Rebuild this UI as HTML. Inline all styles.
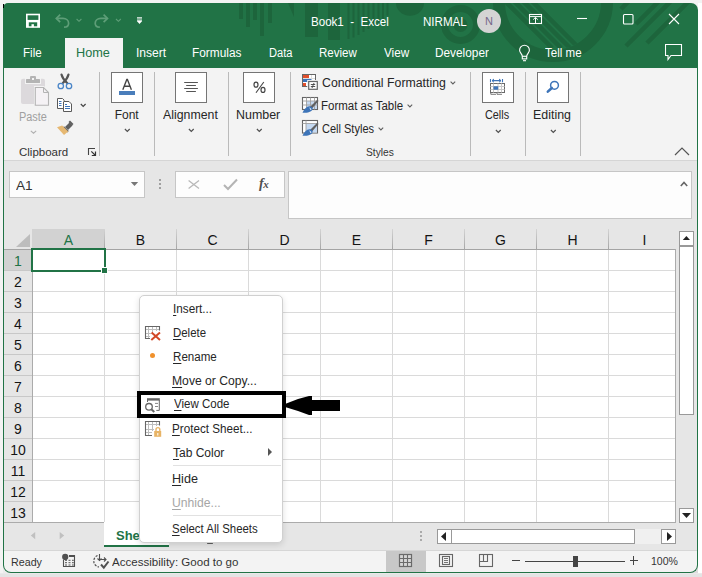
<!DOCTYPE html>
<html><head><meta charset="utf-8">
<style>
*{margin:0;padding:0;box-sizing:border-box}
html,body{width:702px;height:577px;overflow:hidden;background:#f3f3f3;font-family:"Liberation Sans",sans-serif}
.a{position:absolute}
.t{position:absolute;white-space:nowrap;line-height:1}
.w{color:#fff}
.hdr{font-size:14px;line-height:20px;text-align:center}
.sep{position:absolute;width:1px;background:#bababa}
.chev{position:absolute;width:5px;height:5px;border-right:1px solid #555;border-bottom:1px solid #555;transform:rotate(45deg)}
.mi{position:absolute;left:173px;font-size:12px;color:#262626;white-space:nowrap;line-height:1}
.mi u{text-decoration:underline;text-underline-offset:2px}
u{text-decoration:underline;text-underline-offset:1.5px;text-decoration-thickness:1px}
</style></head><body>
<!-- outer -->
<div class="a" style="left:698px;top:3px;width:4px;height:570px;background:#fff"></div>
<div class="a" style="left:0;top:573px;width:702px;height:4px;background:#e4e4e4;border-top:1px solid #eae9ea"></div>

<!-- window -->
<div class="a" style="left:3px;top:3px;width:695px;height:570px;border-radius:5px 7px 7px 7px;background:#217346;overflow:hidden">
  <!-- title pattern -->
  <svg class="a" style="left:0;top:0" width="695" height="64" viewBox="3 3 695 64">
    <g fill="#1d653c">
      <rect x="239" y="3" width="4" height="16"/>
      <rect x="246" y="3" width="4" height="24"/>
      <rect x="253" y="3" width="4" height="17"/>
      <rect x="260" y="3" width="4" height="33"/>
      <rect x="268" y="3" width="4" height="20"/>
      <polygon points="288,3 294,3 294,17"/>
      <rect x="305" y="3" width="13" height="34"/>
      <rect x="328" y="3" width="12" height="37"/>
      <rect x="347.5" y="3" width="2" height="36"/>
      <rect x="352.5" y="3" width="2" height="34.5"/>
      <rect x="357.5" y="3" width="2" height="32"/>
      <rect x="362.5" y="3" width="2" height="29"/>
      <rect x="367.5" y="3" width="2" height="26"/>
      <rect x="372.5" y="3" width="2" height="23"/>
      <rect x="377.5" y="3" width="2" height="19.5"/>
      <rect x="382" y="3" width="2" height="16"/>
      <rect x="386.5" y="3" width="2" height="12.5"/>
      <path d="M396,3 A14,12.7 0 0 0 424,3 Z"/>
    </g>
    <circle cx="460.5" cy="24.5" r="16" fill="none" stroke="#1d653c" stroke-width="7"/>
    <circle cx="460.5" cy="25" r="7" fill="#1d653c"/>
    <circle cx="553" cy="2" r="54" fill="none" stroke="#1d653c" stroke-width="12"/>
    <clipPath id="cin"><circle cx="553" cy="2" r="48"/></clipPath>
    <g clip-path="url(#cin)" stroke="#1d653c" stroke-width="4.5">
      <path d="M502,-2 L552,48 M511,-2 L561,48 M520,-2 L570,48 M529,-2 L579,48"/>
    </g>
    <g stroke="#1d653c" stroke-width="4.5">
      <path d="M621,9 L629,1 M636,24 L662,-2 M626,46 L676,-4 M647,43 L695,-5"/>
    </g>
  </svg>
</div>

<div class="a" style="left:3px;top:4px;width:1px;height:4px;background:#000"></div>
<!-- title bar content -->
<svg class="a" style="left:20px;top:8px" width="130" height="26" viewBox="20 8 130 26">
  <rect x="26" y="13.7" width="14" height="14.1" fill="#fff"/>
  <rect x="27.6" y="15.3" width="10.8" height="4.6" fill="#217346"/>
  <rect x="28.8" y="22.3" width="8.4" height="4" fill="#217346"/>
  <rect x="31.5" y="24.2" width="2.4" height="3" fill="#fff"/>
  <path d="M56.5,18.4 H63 C66.3,18.4 68.6,20.6 68.6,23.2 C68.6,25.6 66.6,27.2 64,27.2" fill="none" stroke="#5e9e78" stroke-width="1.7"/>
  <path d="M60.2,14.6 L56.3,18.4 L60.2,22.2" fill="none" stroke="#5e9e78" stroke-width="1.7"/>
  <path d="M76.6,19 L79,21.3 L81.4,19" fill="none" stroke="#5e9e78" stroke-width="1.1"/>
  <path d="M107.3,18.4 H100.8 C97.5,18.4 95.2,20.6 95.2,23.2 C95.2,25.6 97.2,27.2 99.8,27.2" fill="none" stroke="#5e9e78" stroke-width="1.7"/>
  <path d="M103.6,14.6 L107.5,18.4 L103.6,22.2" fill="none" stroke="#5e9e78" stroke-width="1.7"/>
  <path d="M116,19 L118.4,21.3 L120.8,19" fill="none" stroke="#5e9e78" stroke-width="1.1"/>
  <rect x="137" y="17.3" width="5" height="1.2" fill="#fff"/>
  <rect x="137" y="19.6" width="5" height="1.1" fill="#fff"/>
  <path d="M136.8,21 H142.2 L139.5,23.9 Z" fill="#fff"/>
</svg>
<div class="a" style="left:477px;top:9px;width:24px;height:24px;border-radius:50%;background:#d4d4d4;color:#74688a;font-size:11px;line-height:24px;text-align:center">N</div>
<svg class="a" style="left:520px;top:8px" width="170" height="22" viewBox="520 8 170 22">
  <rect x="529.5" y="14.5" width="12" height="9" fill="none" stroke="#fff" stroke-width="1.1"/>
  <path d="M529.5,16.6 H541.5" stroke="#fff" stroke-width="1"/>
  <path d="M535.5,23.5 V17.5 M533.2,19.6 L535.5,17.4 L537.8,19.6" fill="none" stroke="#fff" stroke-width="1"/>
  <path d="M577,18.5 H587" stroke="#fff" stroke-width="1.1"/>
  <rect x="623.5" y="14.5" width="9.5" height="9.5" rx="1" fill="none" stroke="#fff" stroke-width="1.1"/>
  <path d="M669,14 L679,24 M679,14 L669,24" stroke="#fff" stroke-width="1.1"/>
</svg>

<!-- tabs -->
<div class="a" style="left:65px;top:38px;width:58px;height:30px;background:#f3f3f3"></div>
<svg class="a" style="left:515px;top:42px" width="18" height="22" viewBox="515 42 18 22">
  <path d="M522.3,56.3 C522.3,54 519.6,52.6 519.6,50.2 A4.9,4.9 0 0 1 529.4,50.2 C529.4,52.6 526.7,54 526.7,56.3" fill="none" stroke="#fff" stroke-width="1.1"/>
  <rect x="522.3" y="56.3" width="4.4" height="2.6" fill="none" stroke="#fff" stroke-width="1.1"/>
  <path d="M523,60.7 H526" stroke="#fff" stroke-width="1.1"/>
</svg>
<svg class="a" style="left:665px;top:44px" width="18" height="17" viewBox="0 0 18 17">
  <path d="M0.5,0.5 H16.5 V11.5 H6 L3,15.5 V11.5 H0.5 Z" fill="none" stroke="#fff" stroke-width="1.1"/>
</svg>

<!-- ribbon body -->
<div class="a" style="left:4px;top:68px;width:693px;height:504px;background:#e6e6e6"></div>
<div class="a" style="left:4px;top:68px;width:693px;height:92px;background:#f3f3f3"></div>
<div class="a" style="left:4px;top:160px;width:693px;height:1px;background:#d5d5d5"></div>
<!-- green side borders -->
<div class="a" style="left:3px;top:68px;width:1px;height:500px;background:#217346"></div>
<div class="a" style="left:697px;top:68px;width:1px;height:500px;background:#217346"></div>

<!-- Clipboard group -->
<svg class="a" style="left:20px;top:75px" width="31" height="32" viewBox="20 75 31 32">
  <rect x="21" y="78.7" width="24" height="25.3" rx="2" fill="#dcd9dc"/>
  <rect x="25" y="78" width="16" height="6" fill="#f3f3f3"/>
  <rect x="26" y="79" width="14" height="4" rx="0.5" fill="#b4b4b4"/>
  <rect x="30" y="76" width="6" height="4" rx="1" fill="#b4b4b4"/>
  <rect x="32" y="78" width="2" height="2" fill="#f3f3f3"/>
  <path d="M34,86 H44 L50,92 V106.5 H34 Z" fill="#f3f3f3"/>
  <path d="M35.3,87.5 H43.5 L48.5,92.5 V105.2 H35.3 Z" fill="#f5f2f5" stroke="#b4b4b4" stroke-width="1.1"/>
  <path d="M43.5,87.5 V92.5 H48.5" fill="none" stroke="#b4b4b4" stroke-width="1"/>
</svg>
<svg class="a" style="left:30px;top:130px" width="7" height="4"><path d="M0.8,0.8 L3.5,3.2 L6.2,0.8" fill="none" stroke="#b0b0b0" stroke-width="1.1"/></svg>
<svg class="a" style="left:55px;top:72px" width="20" height="20" viewBox="55 72 20 20">
  <path d="M61.5,74.5 Q62.5,79 67.2,83" fill="none" stroke="#555" stroke-width="2.2" stroke-linecap="round"/>
  <path d="M68.5,74.5 Q67.5,79 62.8,83" fill="none" stroke="#555" stroke-width="2.2" stroke-linecap="round"/>
  <circle cx="60.8" cy="86" r="2.7" fill="none" stroke="#4a85c7" stroke-width="1.3"/>
  <circle cx="69" cy="86" r="2.7" fill="none" stroke="#4a85c7" stroke-width="1.3"/>
</svg>
<svg class="a" style="left:56px;top:97px" width="17" height="16" viewBox="56 97 17 16">
  <path d="M57.5,98.5 H62.5 L64,100 V108.5 H57.5 Z" fill="#fff" stroke="#5a5a5a" stroke-width="1"/>
  <path d="M63.5,101.5 H69 L71.5,104 V111.5 H63.5 Z" fill="#fff" stroke="#5a5a5a" stroke-width="1"/>
  <rect x="62.6" y="100.6" width="1" height="1" fill="#fff"/>
  <path d="M59,101.5 H61.5 M59,103.5 H61.5 M59,105.5 H61.5 M65,104.5 H67 M65,106.5 H70 M65,108.5 H70" stroke="#3d74b8" stroke-width="1"/>
</svg>
<svg class="a" style="left:80px;top:103px" width="7" height="5"><path d="M0.8,1 L3.2,3.4 L5.6,1" fill="none" stroke="#444" stroke-width="1.2"/></svg>
<svg class="a" style="left:56px;top:119px" width="18" height="17" viewBox="56 119 18 17">
  <path d="M69.5,122.5 L72.5,125.5 L68,130 L65,127 Z" fill="#5f5f5f"/>
  <path d="M70,120.5 L73.5,124 L72,125.5 L68.5,122 Z" fill="#5f5f5f"/>
  <path d="M64,126.3 L68.8,131.1 L67.3,132.6 L62.5,127.8 Z" fill="#5f5f5f"/>
  <path d="M57,127.3 L62.2,125.6 L68.2,131.6 L64,135 Z" fill="#e6b872"/>
</svg>
<div class="t" style="display:none"></div>
<svg class="a" style="left:85px;top:145px" width="14" height="14" viewBox="85 145 14 14">
  <path d="M88.5,155 V148.5 H95" fill="none" stroke="#444" stroke-width="1.1"/>
  <path d="M91.3,151.3 L95,155" stroke="#333" stroke-width="1.1"/>
  <path d="M95.5,151.6 V155.5 H91.8" fill="none" stroke="#333" stroke-width="1.2"/>
</svg>
<div class="sep" style="left:99px;top:72px;height:84px"></div>

<!-- Font -->
<div class="a" style="left:111px;top:72px;width:32px;height:31px;background:#fff;border:1px solid #757575"></div>
<svg class="a" style="left:111px;top:72px" width="32" height="31" viewBox="111 72 32 31">
  <path d="M122.8,89.8 L126.8,79.4 H127.4 L131.4,89.8 M124.2,86.2 H130" fill="none" stroke="#444" stroke-width="1.35"/>
  <rect x="119" y="91" width="16" height="4" fill="#4a7ebb"/>
</svg>
<svg class="a" style="left:124px;top:128px" width="7" height="5"><path d="M0.9,1 L3.3,3.4 L5.7,1" fill="none" stroke="#505050" stroke-width="1.2"/></svg>
<div class="sep" style="left:154px;top:72px;height:84px"></div>

<!-- Alignment -->
<div class="a" style="left:175px;top:72px;width:32px;height:31px;background:#fff;border:1px solid #757575"></div>
<svg class="a" style="left:175px;top:72px" width="32" height="31" viewBox="175 72 32 31">
  <path d="M184.2,82.5 H197.9 M186.2,85.5 H195.9 M184.2,88.5 H197.9 M186.2,91.5 H195.9" stroke="#555" stroke-width="1"/>
</svg>
<svg class="a" style="left:188px;top:128px" width="7" height="5"><path d="M0.9,1 L3.3,3.4 L5.7,1" fill="none" stroke="#505050" stroke-width="1.2"/></svg>
<div class="sep" style="left:228px;top:72px;height:84px"></div>

<!-- Number -->
<div class="a" style="left:243px;top:72px;width:32px;height:31px;background:#fff;border:1px solid #757575"></div>
<svg class="a" style="left:243px;top:72px" width="32" height="31" viewBox="243 72 32 31">
  <ellipse cx="256" cy="84.7" rx="2" ry="2.5" fill="none" stroke="#444" stroke-width="1.2"/>
  <ellipse cx="263" cy="89.9" rx="2" ry="2.5" fill="none" stroke="#444" stroke-width="1.2"/>
  <path d="M263.8,82 L256,92.8" stroke="#444" stroke-width="1.1"/>
</svg>
<svg class="a" style="left:256px;top:128px" width="7" height="5"><path d="M0.9,1 L3.3,3.4 L5.7,1" fill="none" stroke="#505050" stroke-width="1.2"/></svg>
<div class="sep" style="left:290px;top:72px;height:84px"></div>

<!-- Styles -->
<svg class="a" style="left:300px;top:72px" width="20" height="20" viewBox="300 72 20 20">
  <rect x="302.5" y="74.5" width="13" height="12" fill="#fff" stroke="#666" stroke-width="1"/>
  <rect x="303" y="75" width="6" height="3" fill="#e0502c"/>
  <rect x="303" y="79" width="8.5" height="3" fill="#3d74b8"/>
  <rect x="303" y="83" width="3" height="3" fill="#e0502c"/>
  <path d="M311.5,75 V78 M303,78.5 H315" stroke="#ddd" stroke-width="1"/>
  <rect x="307.2" y="80" width="11.5" height="10.8" fill="#f3f3f3"/>
  <rect x="308.7" y="81.5" width="8.6" height="7.8" fill="#fff" stroke="#666" stroke-width="1.2"/>
  <path d="M310.8,84.5 H315.2 M310.8,86.5 H315.2 M314,83 L312,88" stroke="#444" stroke-width="0.9"/>
</svg>
<svg class="a" style="left:450px;top:81px" width="6" height="4"><path d="M0.6,0.6 L2.9,2.9 L5.2,0.6" fill="none" stroke="#606060" stroke-width="1.1"/></svg>
<svg class="a" style="left:300px;top:95px" width="20" height="20" viewBox="300 95 20 20">
  <rect x="302.5" y="97.5" width="15" height="12" fill="#fff" stroke="#666" stroke-width="1.1"/>
  <rect x="306.5" y="101" width="10.5" height="8" fill="#c5d9f1"/>
  <path d="M302.5,101 H317.5 M302.5,105 H317.5 M306.5,97.5 V109.5 M310.5,97.5 V109.5 M314.5,97.5 V109.5" stroke="#a0a0a0" stroke-width="0.9"/>
  <path d="M317.5,99.5 L318.5,101 L312,108.5 L310,107 Z" fill="#606060"/>
  <path d="M302.5,112.8 C304,109 306.5,106.5 309.5,106.2 C311.5,106 313,107.5 312.5,109.5 C311.5,112 307,113 302.5,112.8 Z" fill="#3d74b8"/>
  <path d="M309.5,108 Q311.3,108.5 310.8,110" fill="none" stroke="#fff" stroke-width="0.9"/>
</svg>
<svg class="a" style="left:407px;top:104px" width="6" height="4"><path d="M0.6,0.6 L2.9,2.9 L5.2,0.6" fill="none" stroke="#606060" stroke-width="1.1"/></svg>
<svg class="a" style="left:300px;top:118px" width="20" height="20" viewBox="300 118 20 20">
  <rect x="302.5" y="120.5" width="15" height="12.5" fill="#fff" stroke="#666" stroke-width="1.1"/>
  <rect x="306" y="123.5" width="11" height="9" fill="#c5d9f1"/>
  <path d="M302.5,123.5 H317.5 M306,120.5 V133" stroke="#a0a0a0" stroke-width="0.9"/>
  <path d="M317.5,122.5 L318.5,124 L312,131.5 L310,130 Z" fill="#606060"/>
  <path d="M302.5,135.8 C304,132 306.5,129.5 309.5,129.2 C311.5,129 313,130.5 312.5,132.5 C311.5,135 307,136 302.5,135.8 Z" fill="#3d74b8"/>
  <path d="M309.5,131 Q311.3,131.5 310.8,133" fill="none" stroke="#fff" stroke-width="0.9"/>
</svg>
<svg class="a" style="left:378px;top:127px" width="6" height="4"><path d="M0.6,0.6 L2.9,2.9 L5.2,0.6" fill="none" stroke="#606060" stroke-width="1.1"/></svg>
<div class="sep" style="left:470px;top:72px;height:84px"></div>

<!-- Cells -->
<div class="a" style="left:482px;top:72px;width:32px;height:31px;background:#fff;border:1px solid #757575"></div>
<svg class="a" style="left:482px;top:72px" width="32" height="31" viewBox="482 72 32 31">
  <path d="M490.5,79 V82.2 M502.5,79 V82.2 M492,80.6 H501" stroke="#3d74b8" stroke-width="1.1"/>
  <path d="M494,79 L492,80.6 L494,82.2 M499,79 L501,80.6 L499,82.2" fill="none" stroke="#3d74b8" stroke-width="1"/>
  <rect x="490.5" y="83.5" width="14" height="9" fill="#fff" stroke="#6a6a6a" stroke-width="1"/>
  <path d="M490.5,86.5 H504.5 M490.5,89.5 H504.5 M493.5,83.5 V92.5 M498,83.5 V92.5 M501.5,83.5 V92.5" stroke="#c8c8c8" stroke-width="1"/>
  <rect x="493.5" y="86.3" width="4.7" height="3.4" fill="#3d74b8"/>
  <path d="M490.8,93 V94.3 H496 M497,93 V94.3 H502" fill="none" stroke="#6a6a6a" stroke-width="0.9"/>
</svg>
<svg class="a" style="left:495px;top:129px" width="7" height="5"><path d="M0.9,1 L3.3,3.4 L5.7,1" fill="none" stroke="#505050" stroke-width="1.2"/></svg>
<div class="sep" style="left:525px;top:72px;height:84px"></div>

<!-- Editing -->
<div class="a" style="left:537px;top:72px;width:32px;height:31px;background:#fff;border:1px solid #757575"></div>
<svg class="a" style="left:537px;top:72px" width="32" height="31" viewBox="537 72 32 31">
  <circle cx="554.5" cy="85.3" r="3.9" fill="none" stroke="#3d74b8" stroke-width="1.5"/>
  <path d="M551.8,88 L547.8,91.6" stroke="#3d74b8" stroke-width="2.6" stroke-linecap="round"/>
</svg>
<svg class="a" style="left:550px;top:129px" width="7" height="5"><path d="M0.9,1 L3.3,3.4 L5.7,1" fill="none" stroke="#505050" stroke-width="1.2"/></svg>
<div class="sep" style="left:580px;top:72px;height:84px"></div>

<svg class="a" style="left:674px;top:147px" width="16" height="9"><path d="M1,8 L8,1 L15,8" fill="none" stroke="#555" stroke-width="1.2"/></svg>


<!-- formula bar -->
<div class="a" style="left:9px;top:171px;width:136px;height:27px;background:#fdfdfd;border:1px solid #c6c6c6"></div>
<svg class="a" style="left:130px;top:181px" width="10" height="6" viewBox="130 181 10 6"><path d="M130.8,182 H138.2 L134.5,185.9 Z" fill="#777"/></svg>
<div class="a" style="left:159px;top:179px;width:2px;height:2px;background:#a0a0a0"></div>
<div class="a" style="left:159px;top:183px;width:2px;height:2px;background:#a0a0a0"></div>
<div class="a" style="left:159px;top:187px;width:2px;height:2px;background:#a0a0a0"></div>
<div class="a" style="left:175px;top:171px;width:110px;height:27px;background:#fdfdfd;border:1px solid #c6c6c6"></div>
<svg class="a" style="left:186px;top:178px" width="16" height="13" viewBox="186 178 16 13"><path d="M188.6,180.4 L199,188.4 M199,180.4 L188.6,188.4" stroke="#b8b8b8" stroke-width="1.3"/></svg>
<svg class="a" style="left:223px;top:178px" width="15" height="13" viewBox="0 0 15 13"><path d="M1,7 L5,11 L14,1.5" fill="none" stroke="#b4b4b4" stroke-width="2"/></svg>
<div class="t" style="left:259px;top:177px;font-size:14px;color:#505050;font-family:'Liberation Serif',serif;font-style:italic;font-weight:bold;letter-spacing:-0.5px">f<span style="font-size:11px">x</span></div>
<div class="a" style="left:288px;top:171px;width:404px;height:48px;background:#fdfdfd;border:1px solid #c6c6c6"></div>
<svg class="a" style="left:680px;top:181px" width="8" height="6"><path d="M0.8,5 L4,1.5 L7.2,5" fill="none" stroke="#666" stroke-width="1.6"/></svg>

<!-- sheet grid -->
<div class="a" style="left:32px;top:249px;width:644px;height:273px;background:#fff"></div>
<div class="a" style="left:4px;top:229px;width:672px;height:20px;background:#e6e6e6"></div>
<div class="a" style="left:32px;top:229px;width:72px;height:20px;background:#d2d2d2"></div>
<div class="a hdr" style="left:32.5px;top:230px;width:72px;height:20px;color:#217346">A</div>
<div class="a hdr" style="left:104.5px;top:230px;width:72px;height:20px;color:#141414">B</div>
<div class="a" style="left:104px;top:229px;width:1px;height:20px;background:linear-gradient(#d4d4d4,#a6a6a6)"></div>
<div class="a hdr" style="left:176.5px;top:230px;width:72px;height:20px;color:#141414">C</div>
<div class="a" style="left:176px;top:229px;width:1px;height:20px;background:linear-gradient(#d4d4d4,#a6a6a6)"></div>
<div class="a hdr" style="left:248.5px;top:230px;width:72px;height:20px;color:#141414">D</div>
<div class="a" style="left:248px;top:229px;width:1px;height:20px;background:linear-gradient(#d4d4d4,#a6a6a6)"></div>
<div class="a hdr" style="left:320.5px;top:230px;width:72px;height:20px;color:#141414">E</div>
<div class="a" style="left:320px;top:229px;width:1px;height:20px;background:linear-gradient(#d4d4d4,#a6a6a6)"></div>
<div class="a hdr" style="left:392.5px;top:230px;width:72px;height:20px;color:#141414">F</div>
<div class="a" style="left:392px;top:229px;width:1px;height:20px;background:linear-gradient(#d4d4d4,#a6a6a6)"></div>
<div class="a hdr" style="left:464.5px;top:230px;width:72px;height:20px;color:#141414">G</div>
<div class="a" style="left:464px;top:229px;width:1px;height:20px;background:linear-gradient(#d4d4d4,#a6a6a6)"></div>
<div class="a hdr" style="left:536.5px;top:230px;width:72px;height:20px;color:#141414">H</div>
<div class="a" style="left:536px;top:229px;width:1px;height:20px;background:linear-gradient(#d4d4d4,#a6a6a6)"></div>
<div class="a hdr" style="left:608.5px;top:230px;width:72px;height:20px;color:#141414">I</div>
<div class="a" style="left:608px;top:229px;width:1px;height:20px;background:linear-gradient(#d4d4d4,#a6a6a6)"></div>
<div class="a" style="left:4px;top:249px;width:672px;height:1px;background:#a4a4a4"></div>
<div class="a" style="left:33px;top:270px;width:643px;height:1px;background:#dadada"></div>
<div class="a" style="left:33px;top:291px;width:643px;height:1px;background:#dadada"></div>
<div class="a" style="left:33px;top:312px;width:643px;height:1px;background:#dadada"></div>
<div class="a" style="left:33px;top:333px;width:643px;height:1px;background:#dadada"></div>
<div class="a" style="left:33px;top:354px;width:643px;height:1px;background:#dadada"></div>
<div class="a" style="left:33px;top:375px;width:643px;height:1px;background:#dadada"></div>
<div class="a" style="left:33px;top:396px;width:643px;height:1px;background:#dadada"></div>
<div class="a" style="left:33px;top:417px;width:643px;height:1px;background:#dadada"></div>
<div class="a" style="left:33px;top:438px;width:643px;height:1px;background:#dadada"></div>
<div class="a" style="left:33px;top:459px;width:643px;height:1px;background:#dadada"></div>
<div class="a" style="left:33px;top:480px;width:643px;height:1px;background:#dadada"></div>
<div class="a" style="left:33px;top:501px;width:643px;height:1px;background:#dadada"></div>
<div class="a" style="left:33px;top:522px;width:643px;height:1px;background:#dadada"></div>
<div class="a" style="left:104px;top:250px;width:1px;height:272px;background:#dadada"></div>
<div class="a" style="left:176px;top:250px;width:1px;height:272px;background:#dadada"></div>
<div class="a" style="left:248px;top:250px;width:1px;height:272px;background:#dadada"></div>
<div class="a" style="left:320px;top:250px;width:1px;height:272px;background:#dadada"></div>
<div class="a" style="left:392px;top:250px;width:1px;height:272px;background:#dadada"></div>
<div class="a" style="left:464px;top:250px;width:1px;height:272px;background:#dadada"></div>
<div class="a" style="left:536px;top:250px;width:1px;height:272px;background:#dadada"></div>
<div class="a" style="left:608px;top:250px;width:1px;height:272px;background:#dadada"></div>
<div class="a hdr" style="left:4px;top:250px;width:28px;height:20px;background:#d2d2d2;color:#217346;padding-top:1px">1</div>
<div class="a" style="left:4px;top:270px;width:28px;height:1px;background:#c8c8c8"></div>
<div class="a hdr" style="left:4px;top:271px;width:28px;height:20px;background:#e6e6e6;color:#141414;padding-top:1px">2</div>
<div class="a" style="left:4px;top:291px;width:28px;height:1px;background:#c8c8c8"></div>
<div class="a hdr" style="left:4px;top:292px;width:28px;height:20px;background:#e6e6e6;color:#141414;padding-top:1px">3</div>
<div class="a" style="left:4px;top:312px;width:28px;height:1px;background:#c8c8c8"></div>
<div class="a hdr" style="left:4px;top:313px;width:28px;height:20px;background:#e6e6e6;color:#141414;padding-top:1px">4</div>
<div class="a" style="left:4px;top:333px;width:28px;height:1px;background:#c8c8c8"></div>
<div class="a hdr" style="left:4px;top:334px;width:28px;height:20px;background:#e6e6e6;color:#141414;padding-top:1px">5</div>
<div class="a" style="left:4px;top:354px;width:28px;height:1px;background:#c8c8c8"></div>
<div class="a hdr" style="left:4px;top:355px;width:28px;height:20px;background:#e6e6e6;color:#141414;padding-top:1px">6</div>
<div class="a" style="left:4px;top:375px;width:28px;height:1px;background:#c8c8c8"></div>
<div class="a hdr" style="left:4px;top:376px;width:28px;height:20px;background:#e6e6e6;color:#141414;padding-top:1px">7</div>
<div class="a" style="left:4px;top:396px;width:28px;height:1px;background:#c8c8c8"></div>
<div class="a hdr" style="left:4px;top:397px;width:28px;height:20px;background:#e6e6e6;color:#141414;padding-top:1px">8</div>
<div class="a" style="left:4px;top:417px;width:28px;height:1px;background:#c8c8c8"></div>
<div class="a hdr" style="left:4px;top:418px;width:28px;height:20px;background:#e6e6e6;color:#141414;padding-top:1px">9</div>
<div class="a" style="left:4px;top:438px;width:28px;height:1px;background:#c8c8c8"></div>
<div class="a hdr" style="left:4px;top:439px;width:28px;height:20px;background:#e6e6e6;color:#141414;padding-top:1px">10</div>
<div class="a" style="left:4px;top:459px;width:28px;height:1px;background:#c8c8c8"></div>
<div class="a hdr" style="left:4px;top:460px;width:28px;height:20px;background:#e6e6e6;color:#141414;padding-top:1px">11</div>
<div class="a" style="left:4px;top:480px;width:28px;height:1px;background:#c8c8c8"></div>
<div class="a hdr" style="left:4px;top:481px;width:28px;height:20px;background:#e6e6e6;color:#141414;padding-top:1px">12</div>
<div class="a" style="left:4px;top:501px;width:28px;height:1px;background:#c8c8c8"></div>
<div class="a hdr" style="left:4px;top:502px;width:28px;height:20px;background:#e6e6e6;color:#141414;padding-top:1px">13</div>
<div class="a" style="left:4px;top:522px;width:28px;height:1px;background:#c8c8c8"></div>
<!-- select all triangle -->
<svg class="a" style="left:4px;top:229px" width="28" height="20"><path d="M26,5 V18 H12 Z" fill="#bdbdbd"/></svg>
<div class="a" style="left:32px;top:250px;width:1px;height:272px;background:#ababab"></div>
<div class="a" style="left:675px;top:249px;width:1px;height:274px;background:#ababab"></div>
<div class="a" style="left:4px;top:522px;width:672px;height:1px;background:#ababab"></div>

<!-- selection -->
<div class="a" style="left:31px;top:248px;width:75px;height:24px;border:2px solid #217346"></div>
<div class="a" style="left:101px;top:267px;width:7px;height:7px;background:#217346;border:1px solid #fff"></div>

<!-- vertical scrollbar -->
<div class="a" style="left:679px;top:231px;width:15px;height:15px;background:#fff;border:1px solid #999"></div>
<svg class="a" style="left:682px;top:235px" width="9" height="6" viewBox="682 235 9 6"><path d="M682.8,240 H690 L686.4,236 Z" fill="#222"/></svg>
<div class="a" style="left:679px;top:246px;width:15px;height:169px;background:#fff;border:1px solid #999"></div>
<div class="a" style="left:679px;top:508px;width:15px;height:15px;background:#fff;border:1px solid #999"></div>
<svg class="a" style="left:682px;top:513px" width="9" height="6"><path d="M0,0 H9 L4.5,5 Z" fill="#222"/></svg>

<!-- sheet tabs bar -->
<svg class="a" style="left:30px;top:531px" width="6" height="10" viewBox="30 531 6 10"><path d="M35.2,532 V539.3 L30.8,535.6 Z" fill="#c0c0c0"/></svg>
<svg class="a" style="left:59px;top:531px" width="6" height="10" viewBox="59 531 6 10"><path d="M59.7,532 V539.3 L64.2,535.6 Z" fill="#c0c0c0"/></svg>
<div class="a" style="left:104px;top:522px;width:65px;height:25px;background:#fff"></div>
<div class="a" style="left:104px;top:545px;width:65px;height:2px;background:#217346"></div>
<div class="a" style="left:420px;top:531px;width:2px;height:2px;background:#aaa"></div>
<div class="a" style="left:420px;top:535px;width:2px;height:2px;background:#aaa"></div>
<div class="a" style="left:420px;top:539px;width:2px;height:2px;background:#aaa"></div>
<div class="a" style="left:437px;top:529px;width:239px;height:15px;background:#f0f0f0"></div>
<div class="a" style="left:437px;top:529px;width:15px;height:15px;background:#fff;border:1px solid #999"></div>
<svg class="a" style="left:441px;top:532px" width="6" height="9"><path d="M5,0 V9 L0,4.5 Z" fill="#222"/></svg>
<div class="a" style="left:451px;top:529px;width:184px;height:15px;background:#fff;border:1px solid #999"></div>
<div class="a" style="left:661px;top:529px;width:15px;height:15px;background:#fff;border:1px solid #999"></div>
<svg class="a" style="left:667px;top:532px" width="6" height="9"><path d="M0,0 V9 L5,4.5 Z" fill="#222"/></svg>

<!-- status bar -->
<div class="a" style="left:4px;top:550px;width:693px;height:22px;background:#f3f3f3;border-top:1px solid #d6d6d6"></div>
<svg class="a" style="left:58px;top:550px" width="56" height="22" viewBox="58 550 56 22">
  <circle cx="65.2" cy="556.9" r="3.1" fill="#505050"/>
  <rect x="69" y="555" width="6" height="2" fill="#505050"/>
  <path d="M63.5,560 V566.5 H74.5 V555" fill="none" stroke="#505050" stroke-width="1.1"/>
  <path d="M65,560.3 H67 M68.5,560.3 H70.5 M72,560.3 H73.8 M65,562.7 H67 M68.5,562.7 H70.5 M72,562.7 H73.8 M65,565 H67 M68.5,565 H70.5 M72,565 H73.8" stroke="#505050" stroke-width="1"/>
  <path d="M97.5,555.5 A6,6 0 0 0 99,567" fill="none" stroke="#505050" stroke-width="1.2" stroke-dasharray="2.2,1.3"/>
  <path d="M99.5,554 V560.5 M97.5,558.5 L99.5,560.5 L101.5,558.5 M99.5,559.5 H106 M104,557.5 L106,559.5 L104,561.5" fill="none" stroke="#505050" stroke-width="1.1"/>
  <path d="M101,564.5 L103.8,567.6 L108.5,561.5" fill="none" stroke="#505050" stroke-width="2"/>
</svg>
<div class="a" style="left:386px;top:551px;width:40px;height:21px;background:#c8c8c8"></div>
<svg class="a" style="left:396px;top:551px" width="100" height="20" viewBox="396 551 100 20">
  <rect x="399.5" y="554.5" width="12" height="12" fill="#d6d6d6" stroke="#6a6a6a" stroke-width="1.2"/>
  <path d="M403.5,554.5 V566.5 M407.5,554.5 V566.5 M399.5,558.5 H411.5 M399.5,562.5 H411.5" stroke="#6a6a6a" stroke-width="1.1"/>
  <rect x="439.5" y="554.5" width="13" height="12" fill="none" stroke="#666" stroke-width="1.1"/>
  <rect x="442.5" y="556.5" width="7" height="8" fill="none" stroke="#666" stroke-width="1.1"/>
  <path d="M444,558.5 H448 M444,560.5 H448 M444,562.5 H448" stroke="#666" stroke-width="0.9"/>
  <rect x="479.5" y="554.5" width="13" height="12" fill="none" stroke="#666" stroke-width="1.1"/>
  <path d="M483.5,554.5 V561.5 M487.5,554.5 V561.5 H479.5" fill="none" stroke="#666" stroke-width="1.1"/>
</svg>
<div class="a" style="left:512px;top:560px;width:8px;height:1px;background:#444"></div>
<div class="a" style="left:525px;top:561px;width:100px;height:1px;background:#444"></div>
<div class="a" style="left:573px;top:556px;width:5px;height:11px;background:#444"></div>
<div class="a" style="left:630px;top:560px;width:8px;height:1px;background:#444"></div>
<div class="a" style="left:633px;top:556px;width:1px;height:9px;background:#444"></div>
<!-- bottom border -->
<svg class="a" style="left:3px;top:563px" width="10" height="10" viewBox="3 563 10 10"><path d="M3,563 V573 H13 V572.5 A8.5,8.5 0 0 1 3.5,563 Z" fill="#ececec"/></svg>
<svg class="a" style="left:688px;top:563px" width="10" height="10" viewBox="688 563 10 10"><path d="M698,563 V573 H688 V572.5 A8.5,8.5 0 0 0 697.5,563 Z" fill="#dcdcdc"/></svg>
<div class="a" style="left:3px;top:555px;width:695px;height:18px;border:1px solid #217346;border-top:none;border-radius:0 0 8px 8px"></div>

<div style="font-family:'Liberation Sans',sans-serif;white-space:nowrap;line-height:1;position:absolute;left:311.07px;top:16.00px;font-size:12.5px;color:#ffffff;transform:scaleX(0.9253);transform-origin:0 0;">Book1&nbsp; -&nbsp; Excel</div>
<div style="font-family:'Liberation Sans',sans-serif;white-space:nowrap;line-height:1;position:absolute;left:423.07px;top:16.00px;font-size:12.5px;color:#ffffff;transform:scaleX(0.9261);transform-origin:0 0;">NIRMAL</div>
<div style="font-family:'Liberation Sans',sans-serif;white-space:nowrap;line-height:1;position:absolute;left:23.47px;top:47.00px;font-size:12.5px;color:#ffffff;transform:scaleX(0.9263);transform-origin:0 0;">File</div>
<div style="font-family:'Liberation Sans',sans-serif;white-space:nowrap;line-height:1;position:absolute;left:76.38px;top:47.00px;font-size:12.5px;color:#217346;transform:scaleX(1.0156);transform-origin:0 0;">Home</div>
<div style="font-family:'Liberation Sans',sans-serif;white-space:nowrap;line-height:1;position:absolute;left:136.03px;top:47.00px;font-size:12.5px;color:#ffffff;transform:scaleX(0.9667);transform-origin:0 0;">Insert</div>
<div style="font-family:'Liberation Sans',sans-serif;white-space:nowrap;line-height:1;position:absolute;left:192.25px;top:47.00px;font-size:12.5px;color:#ffffff;transform:scaleX(0.9490);transform-origin:0 0;">Formulas</div>
<div style="font-family:'Liberation Sans',sans-serif;white-space:nowrap;line-height:1;position:absolute;left:268.81px;top:47.00px;font-size:12.5px;color:#ffffff;transform:scaleX(0.8885);transform-origin:0 0;">Data</div>
<div style="font-family:'Liberation Sans',sans-serif;white-space:nowrap;line-height:1;position:absolute;left:319.08px;top:47.00px;font-size:12.5px;color:#ffffff;transform:scaleX(0.9225);transform-origin:0 0;">Review</div>
<div style="font-family:'Liberation Sans',sans-serif;white-space:nowrap;line-height:1;position:absolute;left:383.70px;top:47.00px;font-size:12.5px;color:#ffffff;transform:scaleX(0.9370);transform-origin:0 0;">View</div>
<div style="font-family:'Liberation Sans',sans-serif;white-space:nowrap;line-height:1;position:absolute;left:435.05px;top:47.00px;font-size:12.5px;color:#ffffff;transform:scaleX(0.9464);transform-origin:0 0;">Developer</div>
<div style="font-family:'Liberation Sans',sans-serif;white-space:nowrap;line-height:1;position:absolute;left:544.50px;top:47.00px;font-size:12.5px;color:#ffffff;transform:scaleX(0.9250);transform-origin:0 0;">Tell me</div>
<div style="font-family:'Liberation Sans',sans-serif;white-space:nowrap;line-height:1;position:absolute;left:18.79px;top:110.80px;font-size:12px;color:#a0a0a0;transform:scaleX(0.9100);transform-origin:0 0;">Paste</div>
<div style="font-family:'Liberation Sans',sans-serif;white-space:nowrap;line-height:1;position:absolute;left:18.90px;top:147.00px;font-size:11px;color:#333;transform:scaleX(1.0447);transform-origin:0 0;">Clipboard</div>
<div style="font-family:'Liberation Sans',sans-serif;white-space:nowrap;line-height:1;position:absolute;left:114.70px;top:109.00px;font-size:12px;color:#262626;">Font</div>
<div style="font-family:'Liberation Sans',sans-serif;white-space:nowrap;line-height:1;position:absolute;left:163.40px;top:109.00px;font-size:12px;color:#262626;transform:scaleX(1.0278);transform-origin:0 0;">Alignment</div>
<div style="font-family:'Liberation Sans',sans-serif;white-space:nowrap;line-height:1;position:absolute;left:236.46px;top:109.00px;font-size:12px;color:#262626;transform:scaleX(1.0357);transform-origin:0 0;">Number</div>
<div style="font-family:'Liberation Sans',sans-serif;white-space:nowrap;line-height:1;position:absolute;left:321.50px;top:76.80px;font-size:12px;color:#262626;transform:scaleX(1.0258);transform-origin:0 0;">Conditional Formatting</div>
<div style="font-family:'Liberation Sans',sans-serif;white-space:nowrap;line-height:1;position:absolute;left:320.54px;top:99.80px;font-size:12px;color:#262626;transform:scaleX(0.9565);transform-origin:0 0;">Format as Table</div>
<div style="font-family:'Liberation Sans',sans-serif;white-space:nowrap;line-height:1;position:absolute;left:321.50px;top:122.60px;font-size:12px;color:#262626;transform:scaleX(0.9175);transform-origin:0 0;">Cell Styles</div>
<div style="font-family:'Liberation Sans',sans-serif;white-space:nowrap;line-height:1;position:absolute;left:366.40px;top:146.70px;font-size:11px;color:#333;transform:scaleX(0.9300);transform-origin:0 0;">Styles</div>
<div style="font-family:'Liberation Sans',sans-serif;white-space:nowrap;line-height:1;position:absolute;left:485.40px;top:108.70px;font-size:12px;color:#262626;transform:scaleX(0.9037);transform-origin:0 0;">Cells</div>
<div style="font-family:'Liberation Sans',sans-serif;white-space:nowrap;line-height:1;position:absolute;left:533.37px;top:108.70px;font-size:12px;color:#262626;transform:scaleX(1.0343);transform-origin:0 0;">Editing</div>
<div style="font-family:'Liberation Sans',sans-serif;white-space:nowrap;line-height:1;position:absolute;left:16.00px;top:178.80px;font-size:13.5px;color:#333;transform:scaleX(1.0125);transform-origin:0 0;">A1</div>
<div style="font-family:'Liberation Sans',sans-serif;white-space:nowrap;line-height:1;position:absolute;left:116.00px;top:529.00px;font-size:13px;color:#217346;font-weight:bold">Sheet1</div>
<div style="font-family:'Liberation Sans',sans-serif;white-space:nowrap;line-height:1;position:absolute;left:10.63px;top:557.30px;font-size:11px;color:#333;transform:scaleX(0.9742);transform-origin:0 0;">Ready</div>
<div style="font-family:'Liberation Sans',sans-serif;white-space:nowrap;line-height:1;position:absolute;left:111.60px;top:557.30px;font-size:11px;color:#333;transform:scaleX(1.0500);transform-origin:0 0;">Accessibility: Good to go</div>
<div style="font-family:'Liberation Sans',sans-serif;white-space:nowrap;line-height:1;position:absolute;left:650.84px;top:556.00px;font-size:11px;color:#333;transform:scaleX(0.9593);transform-origin:0 0;">100%</div>
<div class="a" style="left:139px;top:295px;width:144px;height:248px;background:#fff;border:1px solid #d0d0d0;border-radius:5px;box-shadow:0 2px 6px rgba(0,0,0,0.13)"></div>
<svg class="a" style="left:142px;top:323px" width="22" height="20" viewBox="142 323 22 20">
  <path d="M148.5,326.5 V338.5 M152.5,326.5 V333 M156.5,326.5 V331 M145.5,329.5 H159.5 M145.5,333.5 H151 M145.5,336.5 H150" stroke="#bdbdbd" stroke-width="1"/>
  <path d="M150,338.5 H145.5 V326.5 H159.5 V330.5" fill="none" stroke="#666" stroke-width="1.1"/>
  <path d="M151.6,332.6 L160,340 M160,332.6 L151.3,340" stroke="#d24726" stroke-width="2"/>
</svg>
<div class="a" style="left:150px;top:353px;width:5px;height:5px;border-radius:50%;background:#f0912c"></div>
<svg class="a" style="left:142px;top:396px" width="20" height="18" viewBox="142 396 20 18">
  <rect x="147" y="398.2" width="12.8" height="2.4" fill="#666"/>
  <path d="M147.5,400 V402 M159.3,400 V410.4 H156.3" fill="none" stroke="#666" stroke-width="1"/>
  <path d="M155,403.4 H158 M155,406.5 H158" stroke="#888" stroke-width="1"/>
  <circle cx="149" cy="406.8" r="3.3" fill="#fff" stroke="#666" stroke-width="1.3"/>
  <path d="M151.3,409.3 L154.3,412" stroke="#666" stroke-width="2"/>
</svg>
<svg class="a" style="left:142px;top:418px" width="22" height="20" viewBox="142 418 22 20">
  <path d="M148.5,421.5 V435.5 M152.5,421.5 V431 M156.5,421.5 V426 M145.5,424.5 H159.5 M145.5,429.5 H154 M145.5,432.5 H152" stroke="#bdbdbd" stroke-width="1"/>
  <path d="M152,435.5 H145.5 V421.5 H159.5 V425.5" fill="none" stroke="#666" stroke-width="1.1"/>
  <path d="M156,431.5 V429.5 A1.9,1.9 0 0 1 159.8,429.5 V431.5" fill="none" stroke="#e8b466" stroke-width="1.4"/>
  <rect x="154.2" y="431" width="7" height="5.8" fill="#e8b466"/>
  <rect x="157.3" y="433" width="1" height="2.5" fill="#fff"/>
</svg>
<svg class="a" style="left:268px;top:448px" width="4" height="8"><path d="M0,0 V8 L4,4 Z" fill="#555"/></svg>
<div class="a" style="left:173px;top:465px;width:108px;height:1px;background:#e1e1e1"></div>
<div class="a" style="left:173px;top:515px;width:108px;height:1px;background:#e1e1e1"></div>

<div class="a" style="left:207px;top:542.5px;width:6px;height:1.5px;border-radius:1px;background:#555"></div>
<!-- annotation -->
<div class="a" style="left:137px;top:391px;width:149px;height:27px;border:4px solid #000"></div>
<svg class="a" style="left:284px;top:394px" width="58" height="24" viewBox="284 394 58 24">
  <path d="M285,404 L298,399 L309,396 L312,396 L312,400 L340,400 L340,411 L312,411 L312,415 L309,415 L298,411 L285,407 Z" fill="#000"/>
</svg>

<div style="font-family:'Liberation Sans',sans-serif;white-space:nowrap;line-height:1;position:absolute;left:172.52px;top:303.00px;font-size:12px;color:#262626;transform:scaleX(0.9763);transform-origin:0 0;"><u>I</u>nsert...</div>
<div style="font-family:'Liberation Sans',sans-serif;white-space:nowrap;line-height:1;position:absolute;left:172.55px;top:326.70px;font-size:12px;color:#262626;transform:scaleX(0.9529);transform-origin:0 0;"><u>D</u>elete</div>
<div style="font-family:'Liberation Sans',sans-serif;white-space:nowrap;line-height:1;position:absolute;left:172.53px;top:351.10px;font-size:12px;color:#262626;transform:scaleX(0.9659);transform-origin:0 0;"><u>R</u>ename</div>
<div style="font-family:'Liberation Sans',sans-serif;white-space:nowrap;line-height:1;position:absolute;left:172.49px;top:374.60px;font-size:12px;color:#262626;transform:scaleX(1.0122);transform-origin:0 0;"><u>M</u>ove or Copy...</div>
<div style="font-family:'Liberation Sans',sans-serif;white-space:nowrap;line-height:1;position:absolute;left:173.50px;top:398.40px;font-size:12px;color:#262626;transform:scaleX(0.9586);transform-origin:0 0;"><u>V</u>iew Code</div>
<div style="font-family:'Liberation Sans',sans-serif;white-space:nowrap;line-height:1;position:absolute;left:172.03px;top:423.20px;font-size:12px;color:#262626;transform:scaleX(0.9716);transform-origin:0 0;"><u>P</u>rotect Sheet...</div>
<div style="font-family:'Liberation Sans',sans-serif;white-space:nowrap;line-height:1;position:absolute;left:173.00px;top:447.10px;font-size:12px;color:#262626;"><u>T</u>ab Color</div>
<div style="font-family:'Liberation Sans',sans-serif;white-space:nowrap;line-height:1;position:absolute;left:171.95px;top:473.00px;font-size:12px;color:#262626;transform:scaleX(1.0500);transform-origin:0 0;"><u>H</u>ide</div>
<div style="font-family:'Liberation Sans',sans-serif;white-space:nowrap;line-height:1;position:absolute;left:171.99px;top:496.90px;font-size:12px;color:#a6a6a6;transform:scaleX(1.0130);transform-origin:0 0;"><u>U</u>nhide...</div>
<div style="font-family:'Liberation Sans',sans-serif;white-space:nowrap;line-height:1;position:absolute;left:172.05px;top:522.90px;font-size:12px;color:#262626;transform:scaleX(0.9517);transform-origin:0 0;"><u>S</u>elect All Sheets</div>
</body></html>
